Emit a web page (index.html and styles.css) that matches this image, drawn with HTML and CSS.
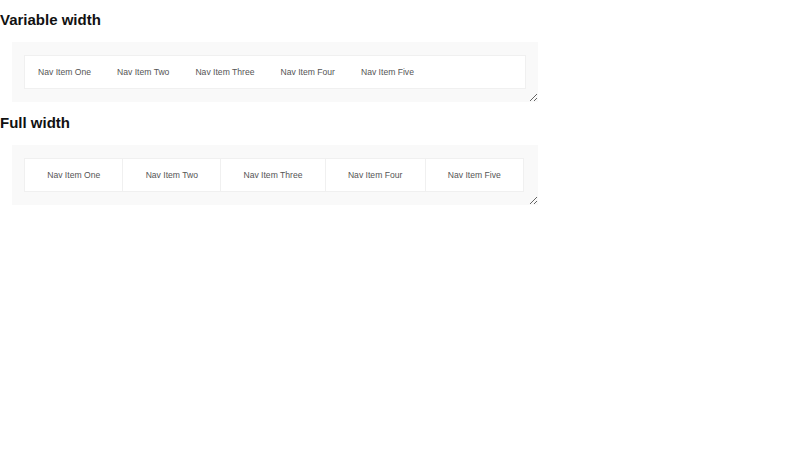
FILE: index.html
```html
<!DOCTYPE html>
<html lang="en">
  <head>
    <meta charset="UTF-8" />
    <meta name="viewport" content="width=device-width, initial-scale=1.0" />
    <title>Nav widths</title>
    <link rel="stylesheet" href="styles.css">
  </head>
  <body>
    <h2>Variable width</h2>
    <div class="demo">
      <ul class="nav nav-variable">
        <li><a href="#">Nav Item One</a></li>
        <li><a href="#">Nav Item Two</a></li>
        <li><a href="#">Nav Item Three</a></li>
        <li><a href="#">Nav Item Four</a></li>
        <li><a href="#">Nav Item Five</a></li>
      </ul>
    </div>

    <h2>Full width</h2>
    <div class="demo">
      <ul class="nav nav-full">
        <li><a href="#">Nav Item One</a></li>
        <li><a href="#">Nav Item Two</a></li>
        <li><a href="#">Nav Item Three</a></li>
        <li><a href="#">Nav Item Four</a></li>
        <li><a href="#">Nav Item Five</a></li>
      </ul>
    </div>
  </body>
</html>
```

FILE: styles.css
```css
body {
  margin: 0;
  font-family: "Liberation Sans", Arial, sans-serif;
  color: #111;
}

h2 {
  margin: 11px 0 13px;
  font-size: 15px;
  line-height: 18px;
}

.demo {
  width: 502px;
  margin: 0 12px 12px;
  padding: 13px 12px;
  background: #f9f9f9;
  resize: both;
  overflow: auto;
}

.nav {
  display: flex;
  margin: 0;
  padding: 0;
  list-style: none;
  background: #fff;
  border: 1px solid #f0f0f0;
}

.nav a {
  display: block;
  line-height: 32px;
  font-size: 8.6px;
  color: #555;
  text-decoration: none;
}

.nav-variable a {
  padding: 0 13px;
}

.nav-full {
  width: 498px;
}

.nav-full li {
  flex: 1 1 auto;
  text-align: center;
}

.nav-full li + li {
  border-left: 1px solid #f0f0f0;
}
```
